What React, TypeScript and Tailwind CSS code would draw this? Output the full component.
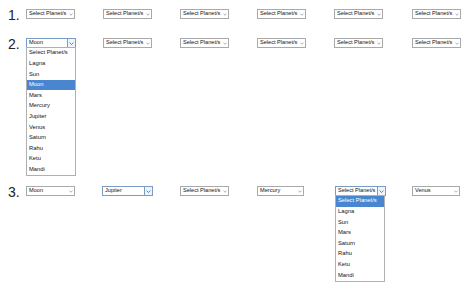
import React from "react";

const FONT = { fontFamily: '"Liberation Sans", Tahoma, Arial, sans-serif' };

function Select({
  value,
  focused = false,
  width = 49,
  options,
  highlighted,
}: {
  value: string;
  focused?: boolean;
  width?: number;
  options?: string[];
  highlighted?: string;
}) {
  return (
    <div className="relative" style={{ width }}>
      <div
        className={`flex h-[10px] items-center border bg-white ${
          focused ? "border-[#7a9cc4]" : "border-[#a9a9a9]"
        }`}
      >
        <span className="min-w-0 flex-1 whitespace-nowrap pl-[2px] text-[5.6px] leading-none text-[#111]">
          {value}
        </span>
        {focused ? (
          <span className="flex h-full w-[8px] shrink-0 items-center justify-center border-l border-[#7a9cc4] bg-[#eef4fb]">
            <svg width="5" height="3" viewBox="0 0 5 3">
              <path d="M0.5 0.5 L2.5 2.5 L4.5 0.5" fill="none" stroke="#4a6a96" strokeWidth="0.8" />
            </svg>
          </span>
        ) : (
          <span className="flex h-full w-[7px] shrink-0 items-center justify-center">
            <svg width="4" height="3" viewBox="0 0 4 3">
              <path d="M0.5 0.8 L2 2.2 L3.5 0.8" fill="none" stroke="#888" strokeWidth="0.7" />
            </svg>
          </span>
        )}
      </div>
      {options && (
        <div className="absolute left-0 top-[9px] z-10 w-[50px] border border-[#b0b0b0] bg-white">
          {options.map((o) => (
            <div
              key={o}
              className={`flex h-[10.6px] items-center whitespace-nowrap pl-[2px] text-[5.8px] leading-none ${
                o === highlighted ? "bg-[#4a86d0] text-white" : "text-[#111]"
              }`}
            >
              {o}
            </div>
          ))}
        </div>
      )}
    </div>
  );
}

function Row({ n, children, className = "" }: { n: string; children: React.ReactNode; className?: string }) {
  return (
    <div className={`flex h-[10px] items-center ${className}`}>
      <div className="w-[26px] shrink-0 pl-[8px] text-[14px] leading-none text-[#222] translate-y-[1px]">
        {n}
      </div>
      <div className="grid shrink-0 grid-cols-[77px_77px_77px_77px_78px_49px]">{children}</div>
    </div>
  );
}

export default function App() {
  const SP = "Select Planet/s";
  const all = [SP, "Lagna", "Sun", "Moon", "Mars", "Mercury", "Jupiter", "Venus", "Saturn", "Rahu", "Ketu", "Mandi"];
  const rem = [SP, "Lagna", "Sun", "Mars", "Saturn", "Rahu", "Ketu", "Mandi"];
  return (
    <div className="h-[283px] w-[474px] overflow-hidden bg-white" style={FONT}>
      <div className="pt-[9px]">
        <Row n="1.">
          <Select value={SP} />
          <Select value={SP} />
          <Select value={SP} />
          <Select value={SP} />
          <Select value={SP} />
          <Select value={SP} />
        </Row>
        <Row n="2." className="mt-[19px]">
          <Select value="Moon" focused width={50} options={all} highlighted="Moon" />
          <Select value={SP} />
          <Select value={SP} />
          <Select value={SP} />
          <Select value={SP} />
          <Select value={SP} />
        </Row>
        <Row n="3." className="mt-[138px]">
          <Select value="Moon" />
          <div className="-ml-px">
            <Select value="Jupiter" focused width={51} />
          </div>
          <Select value={SP} />
          <Select value="Mercury" width={47} />
          <div className="ml-px">
            <Select value={SP} focused width={51} options={rem} highlighted={SP} />
          </div>
          <Select value="Venus" width={48} />
        </Row>
      </div>
    </div>
  );
}
